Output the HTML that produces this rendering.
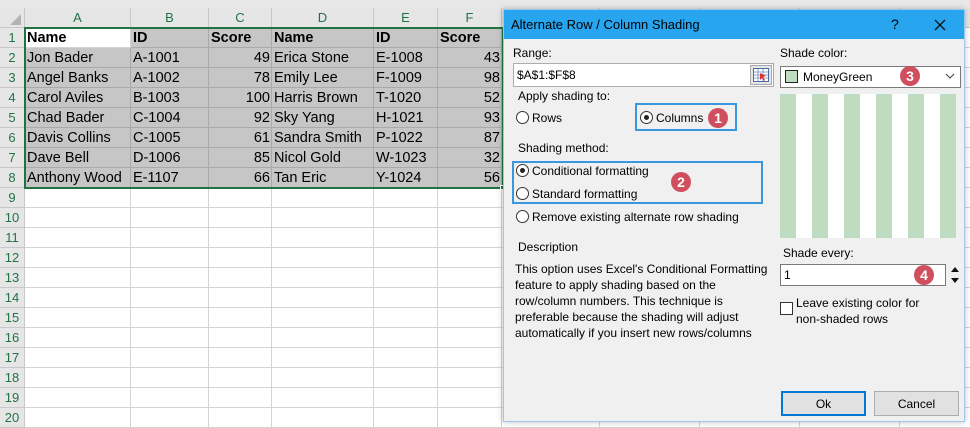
<!DOCTYPE html>
<html><head><meta charset="utf-8"><style>
*{margin:0;padding:0;box-sizing:border-box}
body{width:970px;height:428px;overflow:hidden;background:#fff;position:relative;font-family:"Liberation Sans",Arial,sans-serif}
.a{position:absolute}
.c{position:absolute;font-size:14.5px;color:#000;line-height:20px;white-space:nowrap;overflow:hidden;padding:0 2px}
.h{position:absolute;background:#e6e6e6;color:#217346;font-size:13px;text-align:center;line-height:20px;border-right:1px solid #c8c8c8;border-bottom:1px solid #c8c8c8}
.d{font-family:"Liberation Sans",Arial,sans-serif;font-size:12px;color:#000;position:absolute;white-space:nowrap}
.rad{position:absolute;width:13px;height:13px;border:1px solid #333;border-radius:50%;background:#fff}
.rad.on::after{content:"";position:absolute;left:3px;top:3px;width:5px;height:5px;border-radius:50%;background:#222}
.badge{position:absolute;width:20px;height:20px;border-radius:50%;background:#cf4f5e;color:#fff;font-weight:bold;font-size:14px;text-align:center;line-height:20px;font-family:"Liberation Sans",sans-serif}
.box{position:absolute;border:2px solid #3a96dd}
</style></head><body>
<div class="a" style="left:0;top:0;width:970px;height:8px;background:#e8e8e8"></div>
<div id="g"></div>
<script>
var cols=[25,131,209,272,374,438,502,600,700,800,900,1000];
var names=["A","B","C","D","E","F","G","H","I","J","K"];
var h="";
h+='<div class="h" style="left:0;top:8px;width:25px;height:20px"></div>';
h+='<div class="a" style="left:10px;top:14px;width:0;height:0;border-left:11px solid transparent;border-bottom:11px solid #b4b4b4"></div>';
for(var i=0;i<cols.length-1;i++){h+='<div class="h" style="left:'+cols[i]+'px;top:8px;width:'+(cols[i+1]-cols[i])+'px;height:20px">'+names[i]+'</div>';}
for(var r=0;r<20;r++){var y=28+r*20;h+='<div class="h" style="left:0;top:'+y+'px;width:25px;height:20px;color:#217346">'+(r+1)+'</div>';
for(var i=0;i<cols.length-1;i++){var sel=(r<8&&i<6&&!(r==0&&i==0));h+='<div class="a" style="left:'+cols[i]+'px;top:'+y+'px;width:'+(cols[i+1]-cols[i])+'px;height:20px;border-right:1px solid '+(sel?'#aaa':'#d4d4d4')+';border-bottom:1px solid '+(sel?'#aaa':'#d4d4d4')+';background:'+(sel?'#c6c6c6':'#fff')+'"></div>';}}
var data=[["Name","ID","Score","Name","ID","Score"],["Jon Bader","A-1001","49","Erica Stone","E-1008","43"],["Angel Banks","A-1002","78","Emily Lee","F-1009","98"],["Carol Aviles","B-1003","100","Harris Brown","T-1020","52"],["Chad Bader","C-1004","92","Sky Yang","H-1021","93"],["Davis Collins","C-1005","61","Sandra Smith","P-1022","87"],["Dave Bell","D-1006","85","Nicol Gold","W-1023","32"],["Anthony Wood","E-1107","66","Tan Eric","Y-1024","56"]];
for(var r=0;r<8;r++)for(var i=0;i<6;i++){var w=cols[i+1]-cols[i];var right=(r>0&&(i==2||i==5));h+='<div class="c" style="left:'+cols[i]+'px;top:'+(28+r*20)+'px;width:'+w+'px;'+(r==0?'font-weight:bold;':'')+(right?'text-align:right;':'')+'">'+data[r][i]+'</div>';}
h+='<div class="a" style="left:24px;top:27px;width:480px;height:162px;border:2px solid #217346"></div>';
h+='<div class="a" style="left:500px;top:185px;width:5px;height:5px;background:#217346;border:1px solid #fff"></div>';
document.getElementById("g").innerHTML=h;
</script>
<div class="a" style="left:503px;top:9px;width:462px;height:413px;background:#f0f0f0;border:1px solid #9cc7ea;box-shadow:0 0 6px rgba(0,0,0,.25)">
 <div class="a" style="left:0;top:0;width:460px;height:29px;background:#28a5ef"></div>
 <div class="d" style="left:7px;top:7px;font-size:13px">Alternate Row / Column Shading</div>
 <div class="d" style="left:387px;top:6px;font-size:14px">?</div>
 <svg class="a" style="left:430px;top:9px" width="12" height="12"><path d="M1 1L11 11M11 1L1 11" stroke="#111" stroke-width="1.3"/></svg>
</div>
<div class="d" style="left:513px;top:46px">Range:</div>
<div class="a" style="left:513px;top:63px;width:261px;height:24px;background:#fff;border:1px solid #adadad"></div>
<div class="d" style="left:517px;top:68px">$A$1:$F$8</div>
<div class="a" style="left:750px;top:65px;width:22px;height:20px;background:#e5e5e5;border:1px solid #aaa"></div>
<svg class="a" style="left:753px;top:68px" width="16" height="14"><rect x="0.5" y="0.5" width="15" height="13" fill="#fff" stroke="#4a6fa5"/><path d="M1 4h14M1 7h14M1 10h14M5 1v12M10 1v12" stroke="#6a8cc0" stroke-width=".8"/><path d="M7 5l6 3-3 1 2 3-1 1-2-3-2 2z" fill="#e03030"/></svg>
<div class="d" style="left:518px;top:89px">Apply shading to:</div>
<div class="rad" style="left:516px;top:111px"></div><div class="d" style="left:532px;top:111px">Rows</div>
<div class="box" style="left:635px;top:103px;width:102px;height:28px"></div>
<div class="rad on" style="left:640px;top:111px"></div><div class="d" style="left:656px;top:111px">Columns</div>
<div class="badge" style="left:708px;top:108px">1</div>
<div class="d" style="left:518px;top:141px">Shading method:</div>
<div class="box" style="left:512px;top:161px;width:251px;height:43px"></div>
<div class="rad on" style="left:516px;top:164px"></div><div class="d" style="left:532px;top:164px">Conditional formatting</div>
<div class="rad" style="left:516px;top:187px"></div><div class="d" style="left:532px;top:187px">Standard formatting</div>
<div class="badge" style="left:671px;top:172px">2</div>
<div class="rad" style="left:516px;top:210px"></div><div class="d" style="left:532px;top:210px">Remove existing alternate row shading</div>
<div class="d" style="left:518px;top:240px">Description</div>
<div class="d" style="left:515px;top:261px;line-height:16px;white-space:normal;width:262px">This option uses Excel's Conditional Formatting feature to apply shading based on the row/column numbers. This technique is preferable because the shading will adjust automatically if you insert new rows/columns</div>
<div class="d" style="left:780px;top:46px">Shade color:</div>
<div class="a" style="left:780px;top:66px;width:181px;height:22px;background:#fff;border:1px solid #7a7a7a"></div>
<div class="a" style="left:785px;top:70px;width:13px;height:13px;background:#c0dcc0;border:1px solid #222"></div>
<div class="d" style="left:803px;top:70px">MoneyGreen</div>
<svg class="a" style="left:945px;top:73px" width="10" height="6"><path d="M1 1l4 4 4-4" stroke="#444" fill="none"/></svg>
<div class="badge" style="left:900px;top:66px">3</div>
<div class="a" style="left:780px;top:94px;width:176px;height:144px;background:repeating-linear-gradient(90deg,#c0dcc0 0 16px,#fff 16px 32px)"></div>
<div class="d" style="left:783px;top:246px">Shade every:</div>
<div class="a" style="left:780px;top:264px;width:166px;height:22px;background:#fff;border:1px solid #7a7a7a"></div>
<div class="d" style="left:784px;top:268px">1</div>
<div class="badge" style="left:914px;top:265px">4</div>
<svg class="a" style="left:950px;top:266px" width="10" height="18"><path d="M1 6L5 1L9 6zM1 12L5 17L9 12z" fill="#111"/></svg>
<div class="a" style="left:780px;top:302px;width:13px;height:13px;background:#fff;border:1px solid #333"></div>
<div class="d" style="left:796px;top:295px;line-height:16px">Leave existing color for<br>non-shaded rows</div>
<div class="a" style="left:781px;top:391px;width:85px;height:25px;background:#e1e1e1;border:2px solid #0078d7"></div>
<div class="d" style="left:781px;top:397px;width:85px;text-align:center">Ok</div>
<div class="a" style="left:874px;top:391px;width:85px;height:25px;background:#e1e1e1;border:1px solid #adadad"></div>
<div class="d" style="left:874px;top:397px;width:85px;text-align:center">Cancel</div>
</body></html>
